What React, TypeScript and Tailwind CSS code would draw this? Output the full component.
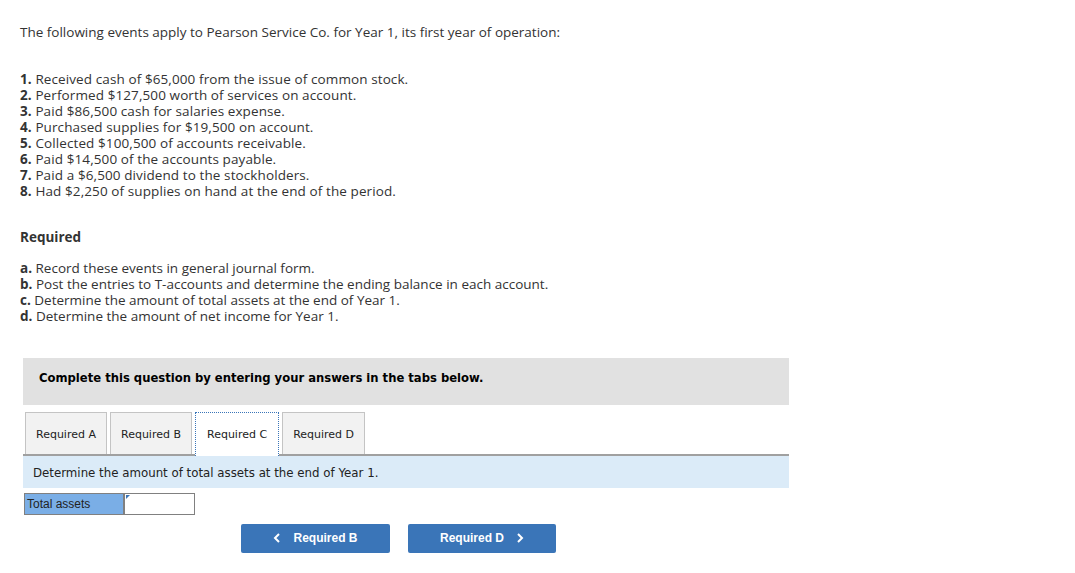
import React from 'react';

const events = [
  'Received cash of $65,000 from the issue of common stock.',
  'Performed $127,500 worth of services on account.',
  'Paid $86,500 cash for salaries expense.',
  'Purchased supplies for $19,500 on account.',
  'Collected $100,500 of accounts receivable.',
  'Paid $14,500 of the accounts payable.',
  'Paid a $6,500 dividend to the stockholders.',
  'Had $2,250 of supplies on hand at the end of the period.',
];

const required = [
  ['a.', 'Record these events in general journal form.'],
  ['b.', 'Post the entries to T-accounts and determine the ending balance in each account.'],
  ['c.', 'Determine the amount of total assets at the end of Year 1.'],
  ['d.', 'Determine the amount of net income for Year 1.'],
];

const tabs = ['Required A', 'Required B', 'Required C', 'Required D'];

const App: React.FC = () => {
  return <div className="w-[1075px] h-[573px] bg-white text-[#333] overflow-hidden" style={{ fontFamily: '"Open Sans", sans-serif' }}>
    <div className="pl-5 pt-[24px] text-[13.5px] leading-4">
      <p>The following events apply to Pearson Service Co. for Year 1, its first year of operation:</p>
      {/* Events list */}
      <ol className="mt-[31px] tracking-[0.1px]">
        {events.map((e, i) => <li key={i}>
          <span className="font-bold">{i + 1}.</span> {e}
        </li>)}
      </ol>
      <h3 className="mt-[30px] font-bold">Required</h3>
      <ul className="mt-[15px]">
        {required.map(([k, t]) => <li key={k}>
          <span className="font-bold">{k}</span> {t}
        </li>)}
      </ul>
    </div>
    <div className="ml-[23px] w-[766px] mt-[34px]" style={{ fontFamily: '"DejaVu Sans", Verdana, sans-serif' }}>
      {/* Instruction bar */}
      <div className="h-[47px] bg-[#e1e1e1] flex items-center pl-4 pb-[5px] text-[11.6px] font-bold text-black">
        Complete this question by entering your answers in the tabs below.
      </div>
      {/* Tabs */}
      <div className="mt-[7px] flex gap-[3px] pl-[2px] border-b-2 border-[#a0a0a0]">
        {tabs.map((t, i) => <div key={t} className={i === 2 ? 'h-[44px] px-[11px] pt-[1px] flex items-center text-[11px] text-[#222] bg-white border border-b-0 border-dotted border-[#3a75b8] -mb-[2px]' : 'h-[42px] px-[10px] pt-[3px] flex items-center text-[11px] text-[#222] bg-[#f2f2f2] border border-[#c4c4c4] border-b-0'}>
          {t}
        </div>)}
      </div>
      <div className="h-[32px] bg-[#dbebf8] flex items-center pl-[10px] pt-[3px] text-[11.8px] text-[#222]">
        Determine the amount of total assets at the end of Year 1.
      </div>
      {/* Answer row */}
      <div className="mt-[5px] ml-px flex h-[22px] border border-[#808080] w-[171px]">
        <div className="w-[99px] bg-[#7aaee6] border-r border-[#808080] text-[12px] text-[#222] pl-[2px] flex items-center" style={{ fontFamily: '"Liberation Sans", Arial, sans-serif' }}>
          Total assets
        </div>
        <div className="relative flex-1 bg-white border border-[#808080] -m-px ml-0">
          <span className="absolute left-px top-px w-0 h-0 border-t-[4px] border-t-[#3a75b8] border-r-[4px] border-r-transparent" />
        </div>
      </div>
      {/* Navigation buttons */}
      <div className="mt-[9px] flex gap-[18px] pl-[218px]" style={{ fontFamily: '"Liberation Sans", Arial, sans-serif' }}>
        <button className="w-[149px] h-[29px] pb-px bg-[#3a75b8] rounded-[2px] text-white text-[12px] font-bold flex items-center justify-center gap-[12px]">
          <svg width="8" height="10" viewBox="0 0 8 10"><path d="M6 1 L2 5 L6 9" stroke="white" strokeWidth="2" fill="none" /></svg>
          Required B
        </button>
        <button className="w-[148px] h-[29px] pb-px bg-[#3a75b8] rounded-[2px] text-white text-[12px] font-bold flex items-center justify-center gap-[12px]">
          Required D
          <svg width="8" height="10" viewBox="0 0 8 10"><path d="M2 1 L6 5 L2 9" stroke="white" strokeWidth="2" fill="none" /></svg>
        </button>
      </div>
    </div>
  </div>;
};

export default App;
